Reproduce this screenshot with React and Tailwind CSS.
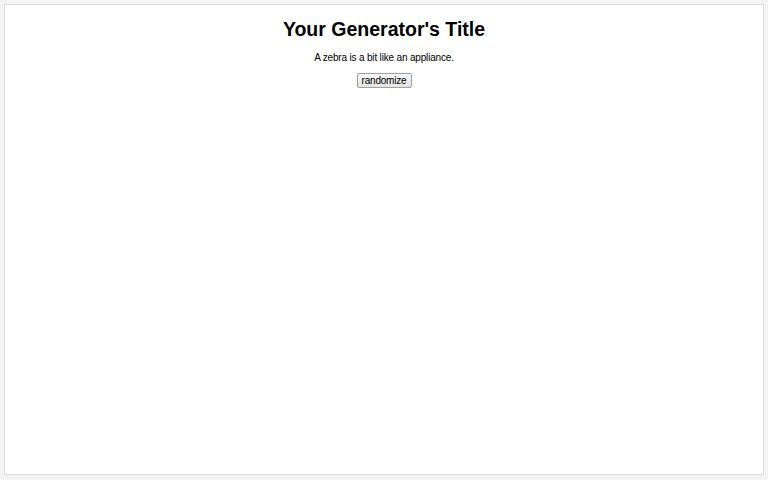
export default function App() {
  return (
    <div className="h-[480px] w-[768px] bg-[#f3f3f3] p-1" style={{ fontFamily: '"Liberation Sans", Arial, sans-serif' }}>
      <div className="h-[471px] border border-[#dcdcdc] bg-white flex flex-col items-center">
        <h1 className="mt-[13px] text-[19.5px] leading-[22px] font-bold text-black">Your Generator's Title</h1>
        <p className="mt-[12px] text-[10px] leading-[12px] tracking-[-0.17px] text-black">A zebra is a bit like an appliance.</p>
        <button className="mt-[9px] h-[15px] w-[55px] text-[10px] leading-[12px] tracking-[-0.2px] text-black bg-[linear-gradient(#f6f6f6,#e4e4e4)] border border-[#a0a0a0] rounded-[2px]">randomize</button>
      </div>
    </div>
  );
}
